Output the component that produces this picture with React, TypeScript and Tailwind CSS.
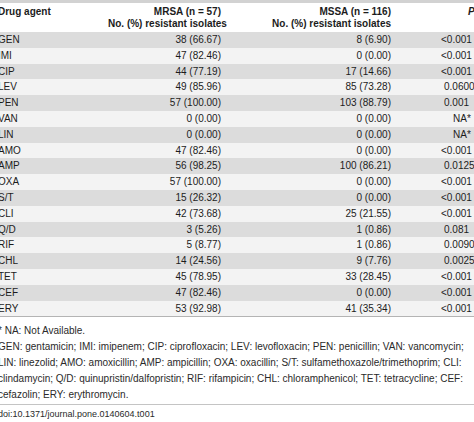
import React from 'react';

interface Row {
  drug: string;
  mrsa: string;
  mssa: string;
  p: string;
}

const rows: Row[] = [
  { drug: 'GEN', mrsa: '38 (66.67)', mssa: '8 (6.90)', p: '<0.001' },
  { drug: 'IMI', mrsa: '47 (82.46)', mssa: '0 (0.00)', p: '<0.001' },
  { drug: 'CIP', mrsa: '44 (77.19)', mssa: '17 (14.66)', p: '<0.001' },
  { drug: 'LEV', mrsa: '49 (85.96)', mssa: '85 (73.28)', p: '0.0600' },
  { drug: 'PEN', mrsa: '57 (100.00)', mssa: '103 (88.79)', p: '0.001' },
  { drug: 'VAN', mrsa: '0 (0.00)', mssa: '0 (0.00)', p: 'NA*' },
  { drug: 'LIN', mrsa: '0 (0.00)', mssa: '0 (0.00)', p: 'NA*' },
  { drug: 'AMO', mrsa: '47 (82.46)', mssa: '0 (0.00)', p: '<0.001' },
  { drug: 'AMP', mrsa: '56 (98.25)', mssa: '100 (86.21)', p: '0.0125' },
  { drug: 'OXA', mrsa: '57 (100.00)', mssa: '0 (0.00)', p: '<0.001' },
  { drug: 'S/T', mrsa: '15 (26.32)', mssa: '0 (0.00)', p: '<0.001' },
  { drug: 'CLI', mrsa: '42 (73.68)', mssa: '25 (21.55)', p: '<0.001' },
  { drug: 'Q/D', mrsa: '3 (5.26)', mssa: '1 (0.86)', p: '0.081' },
  { drug: 'RIF', mrsa: '5 (8.77)', mssa: '1 (0.86)', p: '0.0090' },
  { drug: 'CHL', mrsa: '14 (24.56)', mssa: '9 (7.76)', p: '0.0025' },
  { drug: 'TET', mrsa: '45 (78.95)', mssa: '33 (28.45)', p: '<0.001' },
  { drug: 'CEF', mrsa: '47 (82.46)', mssa: '0 (0.00)', p: '<0.001' },
  { drug: 'ERY', mrsa: '53 (92.98)', mssa: '41 (35.34)', p: '<0.001' },
];

// P values sit a little differently depending on their shape
const pOffset = (p: string) => {
  if (p.startsWith('<')) return 'pl-[50px]';
  if (p.startsWith('NA')) return 'pl-[62px]';
  return 'pl-[53px]';
};

const cols = 'grid grid-cols-[110px_113px_170px_90px]';

export default function App() {
  return (
    <div
      className="w-[474px] h-[422px] overflow-hidden bg-white text-[#1c1c1c]"
      style={{ fontFamily: '"Liberation Sans", Arial, sans-serif' }}
    >
      <div className="ml-[-2px] w-[483px]">
        {/* Top rule */}
        <div className="h-[3px] bg-[#d2d2d2]" />

        {/* Header */}
        <div className={`${cols} h-[29px] pt-[3px] text-[10px] leading-[12px] font-bold`}>
          <div>Drug agent</div>
          <div className="text-right whitespace-nowrap">
            MRSA (n = 57)
            <br />
            No. (%) resistant isolates
          </div>
          <div className="text-right whitespace-nowrap">
            MSSA (n = 116)
            <br />
            No. (%) resistant isolates
          </div>
          <div className="pl-[77px] italic">P</div>
        </div>

        {/* Body */}
        {rows.map((r, i) => (
          <div
            key={r.drug}
            className={`${cols} h-[15.8px] text-[10px] leading-[15.8px] ${
              i % 2 === 0 ? 'bg-[#dcdcdc]' : 'bg-[#f3f3f3]'
            }`}
          >
            <div>{r.drug}</div>
            <div className="text-right whitespace-nowrap">{r.mrsa}</div>
            <div className="text-right whitespace-nowrap">{r.mssa}</div>
            <div className={`${pOffset(r.p)} whitespace-nowrap`}>{r.p}</div>
          </div>
        ))}

        <div className="h-px bg-[#b4b4b4]" />

        {/* Footnotes */}
        <div className="pt-[6px] text-[10px] leading-[16px] text-[#2a2a2a] whitespace-nowrap">
          <p>* NA: Not Available.</p>
          <p>
            GEN: gentamicin; IMI: imipenem; CIP: ciprofloxacin; LEV: levofloxacin; PEN: penicillin; VAN: vancomycin;
            <br />
            LIN: linezolid; AMO: amoxicillin; AMP: ampicillin; OXA: oxacillin; S/T: sulfamethoxazole/trimethoprim; CLI:
            <br />
            clindamycin; Q/D: quinupristin/dalfopristin; RIF: rifampicin; CHL: chloramphenicol; TET: tetracycline; CEF:
            <br />
            cefazolin; ERY: erythromycin.
          </p>
        </div>

        <div className="mt-px h-px bg-[#c4c4c4]" />
        <div className="pt-px text-[9px] leading-[16px] text-[#2a2a2a]">doi:10.1371/journal.pone.0140604.t001</div>
      </div>
    </div>
  );
}
